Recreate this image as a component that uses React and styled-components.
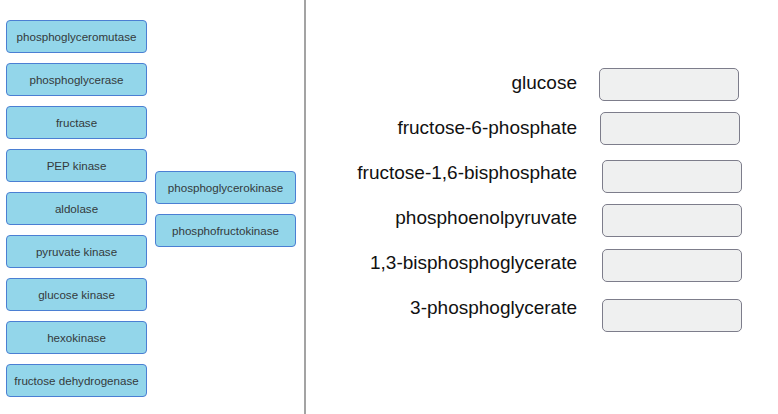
import React from 'react'
import styled, { createGlobalStyle } from 'styled-components'

const GlobalStyle = createGlobalStyle`
    html, body {
        margin: 0;
        padding: 0;
        background: #fff;
    }
    body {
        font-family: "Liberation Sans", Arial, sans-serif;
    }
`

const enzymesLeft = [
    'phosphoglyceromutase',
    'phosphoglycerase',
    'fructase',
    'PEP kinase',
    'aldolase',
    'pyruvate kinase',
    'glucose kinase',
    'hexokinase',
    'fructose dehydrogenase',
]

const enzymesRight = ['phosphoglycerokinase', 'phosphofructokinase']

// top / left nudges follow the reference, the boxes drift a little row to row
const targets = [
    { label: 'glucose', top: 8, left: 0 },
    { label: 'fructose-6-phosphate', top: 7, left: 1 },
    { label: 'fructose-1,6-bisphosphate', top: 10, left: 3 },
    { label: 'phosphoenolpyruvate', top: 9, left: 3 },
    { label: '1,3-bisphosphoglycerate', top: 9, left: 3 },
    { label: '3-phosphoglycerate', top: 14, left: 3 },
]

export default function App() {
    return (
        <>
            <GlobalStyle />
            <Page>
                <Bank>
                    <Column>
                        {enzymesLeft.map((name) => (
                            <Chip key={name}>{name}</Chip>
                        ))}
                    </Column>
                    <Column>
                        {enzymesRight.map((name) => (
                            <Chip key={name}>{name}</Chip>
                        ))}
                    </Column>
                </Bank>
                <Targets>
                    {targets.map((t) => (
                        <Row key={t.label}>
                            <Label>{t.label}</Label>
                            <DropBox $top={t.top} $left={t.left} />
                        </Row>
                    ))}
                </Targets>
            </Page>
        </>
    )
}

const Page = styled.div`
    display: flex;
    width: 778px;
    height: 414px;
    overflow: hidden;
`

const Bank = styled.div`
    box-sizing: border-box;
    width: 306px;
    height: 414px;
    padding: 20px 0 0 6px;
    border-right: 2px solid #a3a3a3;
    display: flex;
    align-items: center;
    align-self: flex-start;
    gap: 8px;
    padding-bottom: 17px;
`

const Column = styled.div`
    display: flex;
    flex-direction: column;
    gap: 10px;
`

const Chip = styled.div`
    box-sizing: border-box;
    width: 141px;
    height: 33px;
    display: flex;
    align-items: center;
    justify-content: center;
    background: #93d6ea;
    border: 1px solid #4b7fd3;
    border-radius: 4px;
    color: #333a3c;
    font-size: 11.6px;
    white-space: nowrap;
`

const Targets = styled.div`
    display: flex;
    flex-direction: column;
    padding-top: 60px;
`

const Row = styled.div`
    display: flex;
    align-items: flex-start;
    height: 45px;
`

const Label = styled.div`
    width: 271px;
    text-align: right;
    line-height: 45px;
    font-size: 19px;
    color: #111;
    white-space: nowrap;
`

const DropBox = styled.div`
    box-sizing: border-box;
    width: 140px;
    height: 33px;
    margin-top: ${(p) => p.$top}px;
    margin-left: ${(p) => 22 + p.$left}px;
    background: #eff0f0;
    border: 1px solid #7d7d8b;
    border-radius: 5px;
`
